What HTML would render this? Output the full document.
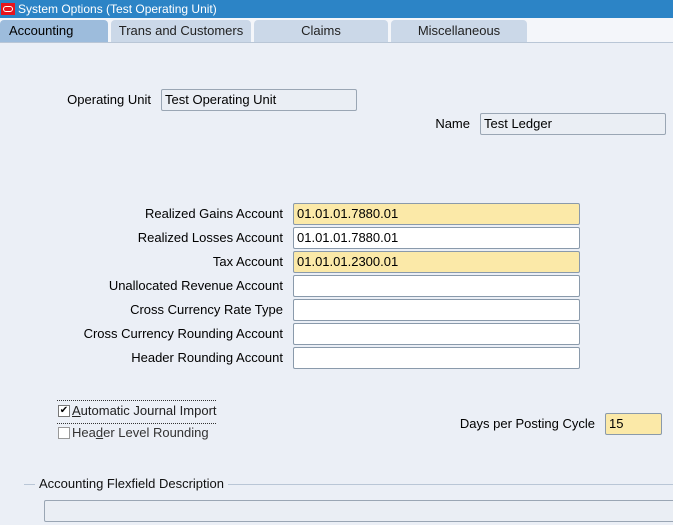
<!DOCTYPE html><html><head><style>
body{margin:0;width:673px;height:525px;overflow:hidden;background:#ebeff6;font-family:"Liberation Sans",Arial,sans-serif;font-size:13px;color:#000;position:relative}
.a{position:absolute}
.title{left:0;top:0;width:673px;height:18px;background:#2c84c6;color:#fff;font-size:12px;line-height:18px}
.logo{left:1px;top:3px;width:14px;height:12px;background:#e8141c}
.logo:after{content:"";position:absolute;left:2px;top:3px;width:8px;height:4px;border:1.5px solid #fff;border-radius:4px}
.strip{left:0;top:18px;width:673px;height:24px;background:#f4f6fa;border-bottom:1px solid #b9c6d6}
.tab{top:20px;height:22px;line-height:22px;text-align:center;background:#cbd8e8;border-radius:4px 4px 0 0;color:#222}
.lbl{text-align:right;width:300px;line-height:22px}
.in{border:1px solid #8a9aab;background:#fff;line-height:20px;padding-left:3px;box-sizing:border-box;height:22px;border-radius:2px}
.ro{background:#eaeef4;border-color:#9aa6b4}
.y{background:#fbe9a8}
</style></head><body>
<div class="a title"><span style="padding-left:18px">System Options (Test Operating Unit)</span></div>
<div class="a logo"></div>
<div class="a strip"></div>
<div class="a tab" style="left:0;width:108px;background:#9dbcdc;text-align:left;padding-left:9px;box-sizing:border-box;color:#000">Accounting</div>
<div class="a tab" style="left:111px;width:140px">Trans and Customers</div>
<div class="a tab" style="left:254px;width:134px">Claims</div>
<div class="a tab" style="left:391px;width:136px">Miscellaneous</div>

<div class="a lbl" style="left:-149px;top:89px">Operating Unit</div>
<div class="a in ro" style="left:161px;top:89px;width:196px">Test Operating Unit</div>
<div class="a lbl" style="left:170px;top:113px">Name</div>
<div class="a in ro" style="left:480px;top:113px;width:186px">Test Ledger</div>

<div class="a lbl" style="left:-17px;top:203px">Realized Gains Account</div>
<div class="a in y" style="left:293px;top:203px;width:287px">01.01.01.7880.01</div>
<div class="a lbl" style="left:-17px;top:227px">Realized Losses Account</div>
<div class="a in" style="left:293px;top:227px;width:287px">01.01.01.7880.01</div>
<div class="a lbl" style="left:-17px;top:251px">Tax Account</div>
<div class="a in y" style="left:293px;top:251px;width:287px">01.01.01.2300.01</div>
<div class="a lbl" style="left:-17px;top:275px">Unallocated Revenue Account</div>
<div class="a in" style="left:293px;top:275px;width:287px"></div>
<div class="a lbl" style="left:-17px;top:299px">Cross Currency Rate Type</div>
<div class="a in" style="left:293px;top:299px;width:287px"></div>
<div class="a lbl" style="left:-17px;top:323px">Cross Currency Rounding Account</div>
<div class="a in" style="left:293px;top:323px;width:287px"></div>
<div class="a lbl" style="left:-17px;top:347px">Header Rounding Account</div>
<div class="a in" style="left:293px;top:347px;width:287px"></div>

<div class="a" style="left:57px;top:400px;width:159px;height:22px;border-top:1px dotted #333;border-bottom:1px dotted #333"></div>
<div class="a" style="left:58px;top:405px;width:10px;height:10px;border:1px solid #777;background:#fff;font-size:10px;line-height:10px;text-align:center">✔</div>
<div class="a" style="left:72px;top:403px;color:#222"><u>A</u>utomatic Journal Import</div>
<div class="a" style="left:58px;top:427px;width:10px;height:10px;border:1px solid #999;background:#fff"></div>
<div class="a" style="left:72px;top:425px;color:#333">Hea<u>d</u>er Level Rounding</div>

<div class="a lbl" style="left:295px;top:413px">Days per Posting Cycle</div>
<div class="a in y" style="left:605px;top:413px;width:57px">15</div>

<div class="a" style="left:24px;top:484px;width:649px;border-top:1px solid #b9c6d6"></div>
<div class="a" style="left:35px;top:476px;padding:0 4px;background:#ebeff6;color:#111">Accounting Flexfield Description</div>
<div class="a in ro" style="left:44px;top:500px;width:640px"></div>
</body></html>
